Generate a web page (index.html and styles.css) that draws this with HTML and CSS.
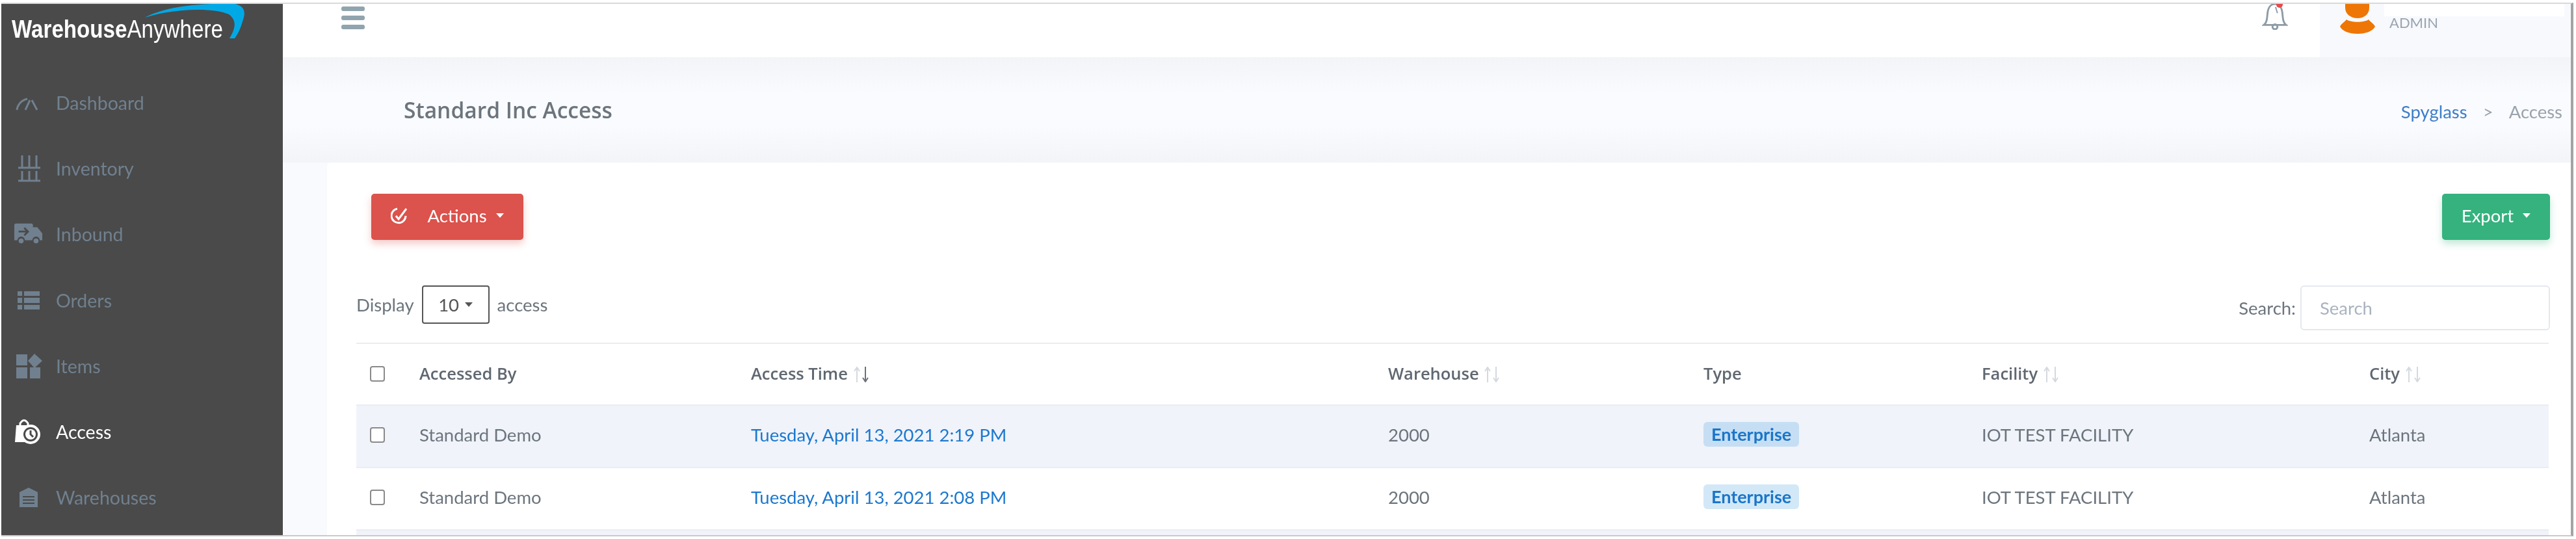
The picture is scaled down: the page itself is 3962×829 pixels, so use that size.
FILE: index.html
```html
<!doctype html>
<html lang="en">
<head>
	<meta charset="utf-8">
	<title>Standard Inc Access</title>
	<link rel="stylesheet" href="styles.css">
</head>
<body>
	<div class="frame">

		<aside class="sidebar">
			<div class="logo">
				<svg class="swoosh" viewBox="0 0 400 70"><path d="M223 21C250 6 300 -2 362 0C376 4 378 12 374 24C370 38 366 46 361 53L353 53C362 38 365 26 352 16C330 6 270 6 223 21Z"/></svg>
				<span class="logo-text"><b>Warehouse</b>Anywhere</span>
			</div>
			<nav class="menu">
				<a class="menu-item">
					<svg viewBox="0 0 44 44"><g fill="none" stroke="currentColor" stroke-width="3"><path d="M4 33C5 25 11 18 20 16"/><path d="M17 33L24 18"/><path d="M27 18L35 33"/></g></svg>
					Dashboard
				</a>
				<a class="menu-item">
					<svg viewBox="0 0 44 44"><g fill="none" stroke="currentColor" stroke-width="3"><path d="M6 21H40M12 2V21M23 2V21M34 2V21"/><path d="M6 41H40M12 26V41M23 26V41M34 26V41"/></g></svg>
					Inventory
				</a>
				<a class="menu-item">
					<svg viewBox="0 0 46 34"><path fill="currentColor" d="M3 0H27Q30 0 30 3V6H37L45 16V27H41A6 6 0 0 0 29 27H17A6 6 0 0 0 5 27H0V3Q0 0 3 0Z"/><circle cx="11" cy="28" r="4" fill="currentColor"/><circle cx="35" cy="28" r="4" fill="currentColor"/><path fill="none" stroke="#4a4a4a" stroke-width="3" d="M7 13H21M16 7L22 13L16 19"/></svg>
					Inbound
				</a>
				<a class="menu-item">
					<svg viewBox="0 0 44 32"><path fill="currentColor" d="M5 2H12V9H5ZM15 2H39V9H15ZM5 12H12V20H5ZM15 12H39V20H15ZM5 23H12V30H5ZM15 23H39V30H15Z"/></svg>
					Orders
				</a>
				<a class="menu-item">
					<svg viewBox="0 0 44 38"><path fill="currentColor" d="M3 1H20V18H3ZM31 0L43 11L31 22L21 11ZM3 21H20V38H3ZM24 21H40V38H24Z"/></svg>
					Items
				</a>
				<a class="menu-item active">
					<svg viewBox="0 0 44 40"><path fill="none" stroke="currentColor" stroke-width="3" d="M9 11V7Q15 -2 21 7V11"/><path fill="currentColor" d="M3 10H27L28 36H1Z"/><circle cx="25" cy="24" r="15" fill="currentColor"/><circle cx="25" cy="24" r="11" fill="#4a4a4a"/><circle cx="25" cy="24" r="8" fill="currentColor"/><path fill="none" stroke="#4a4a4a" stroke-width="3" d="M25 18V24L29 28"/></svg>
					Access
				</a>
				<a class="menu-item">
					<svg viewBox="0 0 44 30"><path fill="currentColor" d="M22 0L36 7V30H8V7Z"/><path fill="none" stroke="#4a4a4a" stroke-width="2" d="M13 14H31M13 19H31M13 24H31"/></svg>
					Warehouses
				</a>
			</nav>
		</aside>

		<div class="main">
			<header class="topbar">
				<div class="burger"><span></span><span></span><span></span></div>
				<div class="bell">
					<svg viewBox="0 0 40 42"><g fill="none" stroke="#8d9ba6" stroke-width="3"><path d="M2 34H38C33 30 33 25 32 15C31 5 26 0 20 0C14 0 9 5 8 15C7 25 7 30 2 34Z"/><circle cx="20" cy="37" r="4"/></g><path d="M21 5L24 15" stroke="#8d9ba6" stroke-width="2"/></svg>
					<i class="bell-dot"></i>
				</div>
				<div class="user">
					<svg class="avatar" viewBox="0 0 54 46"><path fill="#ee7606" d="M8 -6H45V6C45 16 37 22 27 22C17 22 8 16 8 6Z"/><path fill="#ee7606" d="M10 24C17 29 37 29 44 24C47 28 52 30 54 35C50 42 40 46 27 46C14 46 4 42 0 35C2 30 7 28 10 24Z"/></svg>
					<div class="user-info">
						<div class="user-name"></div>
						<div class="user-role">ADMIN</div>
					</div>
				</div>
			</header>

			<div class="page-head">
				<h1>Standard Inc Access</h1>
				<div class="crumbs"><a>Spyglass</a><span class="sep">&gt;</span><span>Access</span></div>
			</div>

			<section class="card">
				<div class="actions-row">
					<button class="btn btn-red">
						<svg viewBox="0 0 26 28"><g fill="none" stroke="#fff" stroke-width="3"><path d="M10 3A11 11 0 1 0 23 14"/><path d="M8 14L12 19L24 3"/></g></svg>
						Actions<i class="caret"></i>
					</button>
					<button class="btn btn-green">Export<i class="caret"></i></button>
				</div>

				<div class="filter-row">
					<div class="display">
						Display
						<div class="select">10<i class="caret"></i></div>
						access
					</div>
					<label class="search">Search:<input type="text" placeholder="Search"></label>
				</div>

				<table class="grid">
					<colgroup>
						<col class="c-check"><col class="c-by"><col class="c-time"><col class="c-wh"><col class="c-type"><col class="c-fac"><col class="c-city">
					</colgroup>
					<thead>
						<tr>
							<th><span class="check"></span></th>
							<th>Accessed By</th>
							<th>Access Time <svg class="sort" viewBox="0 0 24 24"><path class="up" d="M5 24V2M1 7L5 1L9 7"/><path class="down on" d="M18 0V22M14 17L18 23L22 17"/></svg></th>
							<th>Warehouse <svg class="sort" viewBox="0 0 24 24"><path class="up" d="M5 24V2M1 7L5 1L9 7"/><path class="down" d="M18 0V22M14 17L18 23L22 17"/></svg></th>
							<th>Type</th>
							<th>Facility <svg class="sort" viewBox="0 0 24 24"><path class="up" d="M5 24V2M1 7L5 1L9 7"/><path class="down" d="M18 0V22M14 17L18 23L22 17"/></svg></th>
							<th>City <svg class="sort" viewBox="0 0 24 24"><path class="up" d="M5 24V2M1 7L5 1L9 7"/><path class="down" d="M18 0V22M14 17L18 23L22 17"/></svg></th>
						</tr>
					</thead>
					<tbody>
						<tr class="odd">
							<td><span class="check"></span></td>
							<td>Standard Demo</td>
							<td><a class="link">Tuesday, April 13, 2021 2:19 PM</a></td>
							<td>2000</td>
							<td><span class="badge">Enterprise</span></td>
							<td>IOT TEST FACILITY</td>
							<td>Atlanta</td>
						</tr>
						<tr>
							<td><span class="check"></span></td>
							<td>Standard Demo</td>
							<td><a class="link">Tuesday, April 13, 2021 2:08 PM</a></td>
							<td>2000</td>
							<td><span class="badge">Enterprise</span></td>
							<td>IOT TEST FACILITY</td>
							<td>Atlanta</td>
						</tr>
						<tr class="odd">
							<td colspan="7"></td>
						</tr>
					</tbody>
				</table>
			</section>
		</div>
	</div>
</body>
</html>
```

FILE: styles.css
```css
:root {
	--sidebar: #4a4a4a;
	--muted: #70808f;
	--text: #6c757d;
	--line: #e9edf2;
	--stripe: #f0f3fa;
}

html, body {
	height: 100%;
}
body {
	margin: 0;
	background: #fff;
	overflow: hidden;
	font-family: Lato, "Open Sans", sans-serif;
	font-size: 27.5px;
	color: var(--text);
}

.frame {
	display: flex;
	box-sizing: border-box;
	width: 3956px;
	height: 821px;
	margin: 4px 0 0 2px;
	border-top: 2px solid #d9d9d9;
	border-right: 4px solid #a3a3a3;
	border-bottom: 2px solid #c9c9c9;
	overflow: hidden;
	filter: blur(.6px);
}

/* sidebar */
.sidebar {
	flex: 0 0 433px;
	background: var(--sidebar);
}
.logo {
	position: relative;
	height: 101px;
}
.swoosh {
	position: absolute;
	left: -2px;
	top: 0;
	width: 400px;
	height: 70px;
	fill: #00a9e6;
}
.logo-text {
	display: block;
	padding: 16px 0 0 16px;
	font-family: "Liberation Sans", sans-serif;
	font-size: 39px;
	line-height: 46px;
	color: #fff;
	white-space: nowrap;
	transform: scaleX(.85);
	transform-origin: 16px 0;
	position: relative;
}
.menu-item {
	display: flex;
	align-items: center;
	gap: 20px;
	height: 101.3px;
	padding-left: 20px;
	color: var(--muted);
	font-size: 28.5px;
}
.menu-item svg {
	flex: 0 0 44px;
	width: 44px;
	height: 44px;
}
.menu-item.active {
	color: #fff;
}

/* main column */
.main {
	flex: 1;
	display: flex;
	flex-direction: column;
	min-width: 0;
	background: #f9fafd;
}

.topbar {
	display: flex;
	flex: 0 0 82px;
	background: #fff;
	overflow: hidden;
}
.burger {
	display: flex;
	flex-direction: column;
	gap: 7px;
	width: 36px;
	margin: 4px 0 0 90px;
}
.burger span {
	height: 7px;
	border-radius: 3px;
	background: #90a4ae;
}
.bell {
	position: relative;
	width: 40px;
	height: 42px;
	margin: 0 49px 0 auto;
}
.bell svg {
	display: block;
	width: 40px;
	height: 40px;
}
.bell-dot {
	position: absolute;
	top: -4px;
	left: 22px;
	width: 10px;
	height: 10px;
	border-radius: 50%;
	background: #e8484a;
}
.user {
	display: flex;
	flex: 0 0 386px;
	box-sizing: border-box;
	padding-left: 31px;
	background: #f8f9fd;
}
.avatar {
	flex: 0 0 54px;
	height: 46px;
}
.user-info {
	flex: 0 0 277px;
	margin-left: 14px;
}
.user-name {
	height: 19px;
	background: #fff;
}
.user-role {
	padding-left: 8px;
	font-size: 22px;
	line-height: 20px;
	color: #9aa5b1;
}

.page-head {
	display: flex;
	flex: 0 0 162px;
	align-items: center;
	justify-content: space-between;
	padding: 0 13px 0 186px;
	background: linear-gradient(#f3f4f8, #fafbfe 35%, #fafbfe 65%, #f3f4f8);
}
.page-head h1 {
	margin: 0;
	font-family: "Open Sans", sans-serif;
	font-size: 33.5px;
	font-weight: 600;
	color: #6c757d;
}
.crumbs {
	display: flex;
	gap: 24px;
	padding-top: 4px;
	color: #9aa3ae;
}
.crumbs a {
	color: #3d7ec9;
}

.card {
	flex: 1;
	padding: 48px 32px 0 45px;
	background: #fff;
	margin-left: 68px;
	border-top-left-radius: 6px;
}

/* buttons */
.actions-row {
	display: flex;
	justify-content: space-between;
	margin-left: 23px;
}
.btn {
	display: flex;
	align-items: center;
	justify-content: center;
	height: 71px;
	padding: 0 0 4px;
	border: 0;
	border-radius: 5px;
	color: #fff;
	font: inherit;
}
.btn-red {
	width: 234px;
	background: #dc524c;
	box-shadow: 0 6px 12px rgba(220, 82, 76, .3);
}
.btn-red svg {
	width: 26px;
	height: 28px;
	margin-right: 30px;
}
.btn-green {
	width: 166px;
	background: #35b27e;
	box-shadow: 0 6px 12px rgba(53, 178, 126, .3);
}
.caret {
	display: inline-block;
	width: 0;
	height: 0;
	margin-left: 14px;
	border: 6px solid transparent;
	border-top: 7px solid currentColor;
	border-bottom: 0;
}

/* display + search */
.filter-row {
	display: flex;
	justify-content: space-between;
	align-items: flex-start;
	height: 88px;
	margin-top: 70px;
}
.display {
	display: flex;
	align-items: center;
	gap: 12px;
	height: 59px;
}
.select {
	display: flex;
	align-items: center;
	justify-content: center;
	box-sizing: border-box;
	width: 104px;
	height: 59px;
	border: 2px solid #555;
	border-radius: 4px;
	color: #555;
}
.select .caret {
	margin-left: 9px;
}
.search {
	display: flex;
	align-items: center;
	gap: 7px;
}
.search input {
	box-sizing: border-box;
	width: 384px;
	height: 69px;
	padding: 0 28px;
	border: 2px solid #e4e8ee;
	border-radius: 6px;
	font: inherit;
	color: var(--text);
}
.search input::placeholder {
	color: #aab4c0;
}

/* table */
.grid {
	width: 3372px;
	table-layout: fixed;
	border-collapse: collapse;
	border-top: 2px solid var(--line);
}
.c-check { width: 97px; }
.c-by { width: 510px; }
.c-time { width: 980px; }
.c-wh { width: 485px; }
.c-type { width: 428px; }
.c-fac { width: 596px; }
.c-city { width: 276px; }

.grid th, .grid td {
	padding: 0 0 4px;
	text-align: left;
	font-weight: 400;
	vertical-align: middle;
	white-space: nowrap;
}
.grid th {
	height: 89px;
	color: #5f6770;
	font-family: "Open Sans", sans-serif;
	font-weight: 600;
	font-size: 25.5px;
}
.grid td {
	height: 88px;
	padding-bottom: 6px;
	border-top: 2px solid var(--line);
}
.odd {
	background: var(--stripe);
}
.check {
	display: block;
	box-sizing: border-box;
	width: 23px;
	height: 24px;
	margin: 2px 0 0 21px;
	border: 2px solid #8a8a8a;
	border-radius: 4px;
	background: #fff;
}
.link {
	color: #1c78cf;
}
.badge {
	display: inline-block;
	box-sizing: border-box;
	height: 38px;
	padding: 0 12px;
	border-radius: 6px;
	font-size: 27px;
	line-height: 38px;
	font-weight: 700;
	color: #1a76c9;
	background: #d3e8f7;
}
.odd .badge {
	background: #c6def3;
}
.sort {
	width: 24px;
	height: 24px;
	margin-left: 2px;
	vertical-align: -4px;
	fill: none;
	stroke-width: 2;
}
.sort .up, .sort .down {
	stroke: #d5d9de;
}
.sort .down.on {
	stroke: #6b7178;
}
```
